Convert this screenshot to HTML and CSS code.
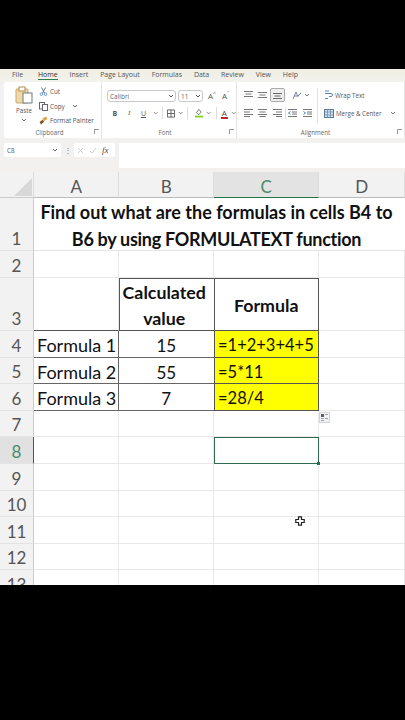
FILE: index.html
```html
<!DOCTYPE html>
<html lang="en">
<head>
<meta charset="utf-8">
<title>Excel FORMULATEXT</title>
<link rel="stylesheet" href="styles.css">
</head>
<body>
<div class="phone">
  <div class="window">
    <nav class="tabs">
      <span class="tab file">File</span><span class="tab active">Home</span><span class="tab">Insert</span><span class="tab">Page Layout</span><span class="tab">Formulas</span><span class="tab">Data</span><span class="tab">Review</span><span class="tab">View</span><span class="tab">Help</span>
    </nav>
    <div class="ribbon">
      <section class="group clip">
        <div class="group-body clip-body">
          <div class="paste">
            <svg width="18" height="18" viewBox="0 0 18 18"><rect x="1" y="3" width="12" height="14" rx="1" fill="#f0d9a8" stroke="#c9a566"/><rect x="4" y="1" width="6" height="4" fill="#fff" stroke="#b08a4e"/><rect x="8" y="7" width="9" height="10" fill="#fff" stroke="#6d7a86"/></svg>
            <span>Paste</span>
            <svg width="6" height="4" viewBox="0 0 6 4"><path d="M1 1l2 2 2-2" fill="none" stroke="#666"/></svg>
          </div>
          <div class="clip-list">
            <div class="clip-row"><svg width="9" height="9" viewBox="0 0 9 9"><path d="M2.500 0.500L5.500 6M6.500 0.500L3.500 6" stroke="#6a7a88" fill="none"/><circle cx="2.400" cy="7.200" r="1.300" fill="none" stroke="#6a9ac8"/><circle cx="6.600" cy="7.200" r="1.300" fill="none" stroke="#6a9ac8"/></svg><span>Cut</span></div>
            <div class="clip-row"><svg width="9" height="9" viewBox="0 0 9 9"><rect x="0.500" y="0.500" width="5" height="6.500" fill="#fff" stroke="#667"/><rect x="3.500" y="2.500" width="5" height="6" fill="#fff" stroke="#667"/></svg><span>Copy</span><svg class="copy-chev" width="6" height="4" viewBox="0 0 6 4"><path d="M1 1l2 2 2-2" fill="none" stroke="#666"/></svg></div>
            <div class="clip-row"><svg width="9" height="9" viewBox="0 0 9 9"><path d="M3.500 2.500L7 0.500 8.500 3 5 5z" fill="#e0a43c"/><path d="M0.500 6L4 3.500 5 6 2 8.500z" fill="#7b5a2b"/></svg><span>Format Painter</span></div>
          </div>
        </div>
        <div class="group-label">Clipboard<i class="launcher"></i></div>
      </section>
      <section class="group font">
        <div class="group-body font-body">
          <div class="font-row">
            <div class="select font-name"><span>Calibri</span><svg width="6" height="4" viewBox="0 0 6 4"><path d="M1 1l2 2 2-2" fill="none" stroke="#555"/></svg></div>
            <div class="select font-size"><span>11</span><svg width="6" height="4" viewBox="0 0 6 4"><path d="M1 1l2 2 2-2" fill="none" stroke="#555"/></svg></div>
            <span class="grow">A<sup>^</sup></span><span class="grow">A<sup>ˇ</sup></span>
          </div>
          <div class="font-row second">
            <b class="fmt">B</b><i class="fmt">I</i><u class="fmt">U</u>
            <svg class="chev" width="6" height="4" viewBox="0 0 6 4"><path d="M1 1l2 2 2-2" fill="none" stroke="#777"/></svg>
            <i class="vsep"></i>
            <svg width="9" height="9" viewBox="0 0 9 9"><path d="M.5.5h8v8h-8zM4.500.5v8M.5 4.500h8" fill="none" stroke="#555"/></svg>
            <svg class="chev" width="6" height="4" viewBox="0 0 6 4"><path d="M1 1l2 2 2-2" fill="none" stroke="#777"/></svg>
            <i class="vsep"></i>
            <svg class="fill" width="9" height="10" viewBox="0 0 9 10"><path d="M4.500 1L1.500 4.500 4 7l3-3z" fill="#fff" stroke="#666"/><rect y="8" width="9" height="2" fill="#7ed321"/></svg>
            <svg class="chev" width="6" height="4" viewBox="0 0 6 4"><path d="M1 1l2 2 2-2" fill="none" stroke="#777"/></svg>
            <i class="vsep"></i>
            <span class="red-a">A</span>
            <svg class="chev" width="6" height="4" viewBox="0 0 6 4"><path d="M1 1l2 2 2-2" fill="none" stroke="#777"/></svg>
          </div>
        </div>
        <div class="group-label">Font<i class="launcher"></i></div>
      </section>
      <section class="group align">
        <div class="group-body align-body">
          <div class="align-icons">
            <div class="icon-row">
              <span class="ai"><svg width="9" height="8" viewBox="0 0 9 8"><path d="M0 .5h9M1.500 3h6M0 5.500h9" stroke="#777"/></svg></span>
              <span class="ai"><svg width="9" height="8" viewBox="0 0 9 8"><path d="M0 1.500h9M1.500 4h6M0 6.500h9" stroke="#777"/></svg></span>
              <span class="ai on"><svg width="9" height="8" viewBox="0 0 9 8"><path d="M0 2.500h9M1.500 5h6M0 7.500h9" stroke="#666"/></svg></span>
              <span class="orient"><svg width="10" height="9" viewBox="0 0 10 9"><path d="M1 8L4 1l2 5M2 5h3" fill="none" stroke="#8a7fa8"/><path d="M6 5l3-3" stroke="#5d84b5"/></svg><svg width="6" height="4" viewBox="0 0 6 4"><path d="M1 1l2 2 2-2" fill="none" stroke="#777"/></svg></span>
            </div>
            <div class="icon-row">
              <span class="ai"><svg width="9" height="8" viewBox="0 0 9 8"><path d="M0 .5h9M0 3h6M0 5.500h9M0 7.500h6" stroke="#777"/></svg></span>
              <span class="ai"><svg width="9" height="8" viewBox="0 0 9 8"><path d="M0 .5h9M1.500 3h6M0 5.500h9M1.500 7.500h6" stroke="#777"/></svg></span>
              <span class="ai"><svg width="9" height="8" viewBox="0 0 9 8"><path d="M0 .5h9M3 3h6M0 5.500h9M3 7.500h6" stroke="#777"/></svg></span>
              <i class="vsep tall"></i>
              <span class="ai"><svg width="9" height="8" viewBox="0 0 9 8"><path d="M0 .5h9M4 3h5M4 5h5M0 7.500h9" stroke="#777"/><path d="M2.500 2.500L.5 4l2 1.500" fill="none" stroke="#4a7fb5"/></svg></span>
              <span class="ai"><svg width="9" height="8" viewBox="0 0 9 8"><path d="M0 .5h9M4 3h5M4 5h5M0 7.500h9" stroke="#777"/><path d="M.5 2.500L2.500 4 .5 5.500" fill="none" stroke="#4a7fb5"/></svg></span>
            </div>
          </div>
          <div class="wrap-list">
            <div class="wrap-row"><svg width="9" height="10" viewBox="0 0 9 10"><path d="M1 1h4M1 3.500h6a1.500 1.500 0 0 1 0 3H5M1 8.500h3" fill="none" stroke="#5d84b5"/></svg><span>Wrap Text</span></div>
            <div class="wrap-row"><svg width="10" height="9" viewBox="0 0 10 9"><rect x=".5" y=".5" width="9" height="8" fill="#cfe0f0" stroke="#5a7a99"/><path d="M3.500 1v7M6.500 1v7M1 3h8M1 6h8" stroke="#5a7a99" stroke-width=".6"/></svg><span>Merge &amp; Center</span><svg class="merge-chev" width="6" height="4" viewBox="0 0 6 4"><path d="M1 1l2 2 2-2" fill="none" stroke="#777"/></svg></div>
          </div>
        </div>
        <div class="group-label">Alignment<i class="launcher"></i></div>
      </section>
    </div>
    <div class="formula-bar">
      <div class="name-box"><span>C8</span><svg width="6" height="4" viewBox="0 0 6 4"><path d="M1 1l2 2 2-2" fill="none" stroke="#666"/></svg></div>
      <span class="dots">⋮</span>
      <div class="fx-box">
        <svg width="7" height="7" viewBox="0 0 7 7"><path d="M1 1l5 5M6 1L1 6" stroke="#d0d0d0"/></svg>
        <svg width="8" height="7" viewBox="0 0 8 7"><path d="M1 4l2 2 4-5" fill="none" stroke="#d0d0d0"/></svg>
        <span class="fx">fx</span>
      </div>
      <div class="formula-input"></div>
    </div>
    <div class="sheet">
      <div class="corner"><svg width="20" height="20" viewBox="0 0 20 20"><path d="M20 2v18H2z" fill="#d8d8d8"/></svg></div>
      <div class="col">A</div><div class="col">B</div><div class="col sel">C</div><div class="col">D</div>

      <div class="row-h tall-h">1</div><div class="title">Find out what are the formulas in cells B4 to<br><span class="title-two">B6 by using FORMULATEXT function</span></div>
      <div class="row-h">2</div><div class="c"></div><div class="c"></div><div class="c"></div><div class="c"></div>
      <div class="row-h tall-h">3</div><div class="c under"></div><div class="c head calc">Calculated<br>value</div><div class="c head right">Formula</div><div class="c"></div>
      <div class="row-h">4</div><div class="c lab">Formula 1</div><div class="c val">15</div><div class="c form">=1+2+3+4+5</div><div class="c"></div>
      <div class="row-h">5</div><div class="c lab">Formula 2</div><div class="c val">55</div><div class="c form">=5*11</div><div class="c"></div>
      <div class="row-h">6</div><div class="c lab">Formula 3</div><div class="c val">7</div><div class="c form">=28/4</div><div class="c"></div>
      <div class="row-h">7</div><div class="c"></div><div class="c"></div><div class="c"></div><div class="c"></div>
      <div class="row-h sel-row">8</div><div class="c"></div><div class="c"></div><div class="c active-cell"><i class="handle"></i></div><div class="c"></div>
      <div class="row-h">9</div><div class="c"></div><div class="c"></div><div class="c"></div><div class="c"></div>
      <div class="row-h">10</div><div class="c"></div><div class="c"></div><div class="c"></div><div class="c"></div>
      <div class="row-h">11</div><div class="c"></div><div class="c"></div><div class="c"></div><div class="c"></div>
      <div class="row-h">12</div><div class="c"></div><div class="c"></div><div class="c"></div><div class="c"></div>
      <div class="row-h">13</div><div class="c"></div><div class="c"></div><div class="c"></div><div class="c"></div>

      <div class="paste-opt"><svg width="11" height="11" viewBox="0 0 11 11"><rect x=".5" y=".5" width="10" height="10" fill="#f2f2f2" stroke="#d5d5d5"/><rect x="2" y="2" width="3" height="3" fill="#55606c"/><path d="M6 2.500h3M2 6.500h3M6 6.500h3M2 8.500h3" stroke="#9aa4ae"/></svg></div>
      <svg class="cursor" width="10" height="10" viewBox="0 0 10 10"><path d="M3.500 .8h3v2.700h2.700v3H6.500v2.700h-3V6.500H.8v-3h2.700z" fill="#fff" stroke="#222" stroke-width="1.200"/></svg>
    </div>
  </div>
</div>
</body>
</html>
```
FILE: styles.css
```css
* { box-sizing: border-box; }
html, body { margin: 0; padding: 0; background: #000; }
.phone { width: 405px; height: 720px; padding-top: 69px; background: #000; overflow: hidden; font-family: "Open Sans", "Liberation Sans", sans-serif; }
.window { height: 516px; background: #f2f1f0; overflow: hidden; display: flex; flex-direction: column; }

.tabs { height: 13px; flex: none; display: flex; align-items: center; gap: 11.800px; padding: 0 0 2px 12px; background: linear-gradient(#eeeee2, #f3f2ee); font-size: 7px; color: #555; }
.tab.file { margin-right: 3px; }
.tab.active { color: #333; border-bottom: 1px solid #2f7d55; line-height: 9px; }

.ribbon { height: 56px; flex: none; margin-left: 4px; display: flex; background: #fff; border-radius: 3px 0 0 3px; }
.group { display: flex; flex-direction: column; border-right: 1px solid #e4e4e4; margin: 0; }
.group-body { flex: 1; min-height: 0; }
.group-label { position: relative; height: 13px; text-align: center; font-size: 6.200px; line-height: 15px; color: #666; }
.launcher { position: absolute; right: 2px; top: 4px; width: 5px; height: 5px; border-left: 1px solid #999; border-top: 1px solid #999; }
.clip { width: 98px; }
.clip .group-label { padding-right: 6px; }
.font { width: 135px; }
.font .group-label { padding-right: 8px; }
.align { flex: 1; }
.align .group-label { padding-right: 10px; }

.clip-body { display: flex; padding: 4px 0 0 10px; font-size: 6.300px; color: #555; }
.paste { width: 20px; display: flex; flex-direction: column; align-items: center; gap: 3px; font-size: 6.200px; line-height: 8px; }
.clip-list { margin-left: 4px; display: flex; flex-direction: column; gap: 5.500px; padding-top: 1px; }
.clip-row { display: flex; align-items: center; gap: 2px; height: 9px; margin-left: 1px; }
.copy-chev { margin-left: 5px; }

.font-body { padding: 8px 0 0 5px; font-size: 6.500px; color: #666; }
.font-row { display: flex; align-items: center; height: 12px; }
.select { display: flex; align-items: center; justify-content: space-between; height: 12px; background: #fff; border: 1px solid #c8c8c8; border-radius: 3px; padding: 0 1px 0 2px; }
.font-name { width: 69px; }
.font-size { width: 25px; margin-left: 2px; }
.grow { font-size: 8px; margin-left: 5px; color: #555; line-height: 12px; white-space: nowrap; }
.grow:last-child { margin-left: 6px; }
.grow sup { font-size: 5px; line-height: 0; }
.second { margin-top: 5px; padding-left: 3px; gap: 3px; }
.fmt { font-size: 7px; width: 11px; font-family: "Liberation Serif", serif; text-align: center; color: #555; }
b.fmt { font-family: "Open Sans", sans-serif; }
u.fmt { font-family: "Open Sans", sans-serif; }
.second .fmt { margin-right: 1.500px; }
.vsep { width: 1px; height: 12px; background: #ddd; margin: 0 1px; }
.fill { margin-left: 3px; }
.red-a { font-size: 8px; line-height: 9px; color: #444; border-bottom: 2px solid #c8232c; padding: 0 1px; }

.align-body { display: flex; padding: 6px 0 0 4px; }
.align-icons { width: 77px; display: flex; flex-direction: column; gap: 4px; border-right: 1px solid #e0e0e0; height: 35px; }
.icon-row { display: flex; align-items: center; height: 14px; }
.ai { width: 14.500px; height: 14px; display: flex; align-items: center; justify-content: center; }
.ai.on { background: #eee; border: 1px solid #aaa; border-radius: 2px; }
.orient { display: flex; align-items: center; gap: 2px; margin-left: 7px; }
.vsep.tall { margin: 0; }
.wrap-list { margin-left: 6px; font-size: 6.200px; color: #555; display: flex; flex-direction: column; gap: 6px; padding-top: 1px; }
.wrap-row { display: flex; align-items: center; gap: 2px; height: 12px; white-space: nowrap; }
.merge-chev { margin-left: 6px; }

.formula-bar { height: 34px; flex: none; display: flex; align-items: flex-start; padding: 5px 0 0 4px; font-size: 6.400px; color: #555; }
.name-box { width: 57px; height: 14px; display: flex; align-items: center; justify-content: space-between; padding: 0 3px; background: #fff; border-radius: 2px; }
.dots { width: 13px; text-align: center; line-height: 14px; font-size: 8px; color: #777; }
.fx-box { width: 41px; height: 14px; display: flex; align-items: center; gap: 5px; padding-left: 3px; background: #fff; border-radius: 2px; }
.fx { font-family: "Liberation Serif", serif; font-style: italic; font-size: 9px; color: #444; }
.formula-input { flex: 1; height: 25px; margin-left: 4px; background: #fff; }

.sheet { position: relative; flex: none; display: grid; grid-template-columns: 34px 84.500px 95.500px 104.500px 86.500px; grid-template-rows: 26px 53.200px 26.600px 53.200px repeat(10, 26.600px); background: #fff; font-family: Lato, "Open Sans", sans-serif; color: #111; }
.corner { background: #f2f2f2; display: flex; align-items: flex-end; justify-content: flex-end; padding: 0 1px 1px 0; border-right: 1px solid #ddd; border-bottom: 1px solid #ccc; }
.col { background: #f2f2f2; border-right: 1px solid #ddd; border-bottom: 1px solid #bbb; text-align: center; font-size: 17px; line-height: 29px; color: #555; padding-left: 1px; }
.col.sel { background: #e3e3e3; color: #4a8a6c; border-bottom: 1px solid #217346; }
.row-h { background: #f2f2f2; border-right: 1px solid #ccc; border-bottom: 1px solid #e3e3e3; display: flex; align-items: flex-end; justify-content: center; font-size: 17px; line-height: 23px; color: #555; }
.row-h.sel-row { background: #e1e1e1; color: #4a8a6c; border-right: 1px solid #217346; }
.title { grid-column: 2 / span 4; padding: 1px 6px 0 0; text-align: center; font-size: 18px; font-weight: 700; line-height: 26.600px; color: #111; border-bottom: 1px solid #e3e3e3; white-space: nowrap; }
.title-two { letter-spacing: -0.300px; }
.c { border-right: 1px solid #e8e8e8; border-bottom: 1px solid #e8e8e8; font-size: 18px; line-height: 29px; white-space: nowrap; }
.under { border-bottom: 1px solid #555; }
.head { border: 1px solid #555; border-right: none; font-weight: 700; text-align: center; display: flex; align-items: center; justify-content: center; font-size: 17.800px; line-height: 26.800px; padding-top: 2px; }
.calc { padding-right: 5px; }
.head.right { border-right: 1px solid #555; }
.lab { padding-left: 3px; border-right: 1px solid #666; border-bottom: 1px solid #666; }
.val { text-align: center; border-right: none; border-bottom: 1px solid #666; font-size: 17px; }
.form { background: #ff0; padding-left: 3px; border: 1px solid #555; border-top: none; font-size: 16.500px; }
.active-cell { position: relative; border: 1.500px solid #2d6a4f; }
.handle { position: absolute; right: -2px; bottom: -2px; width: 3px; height: 3px; background: #2d6a4f; }
.paste-opt { position: absolute; left: 319px; top: 240px; display: flex; }
.cursor { position: absolute; left: 295px; top: 344px; }
```
